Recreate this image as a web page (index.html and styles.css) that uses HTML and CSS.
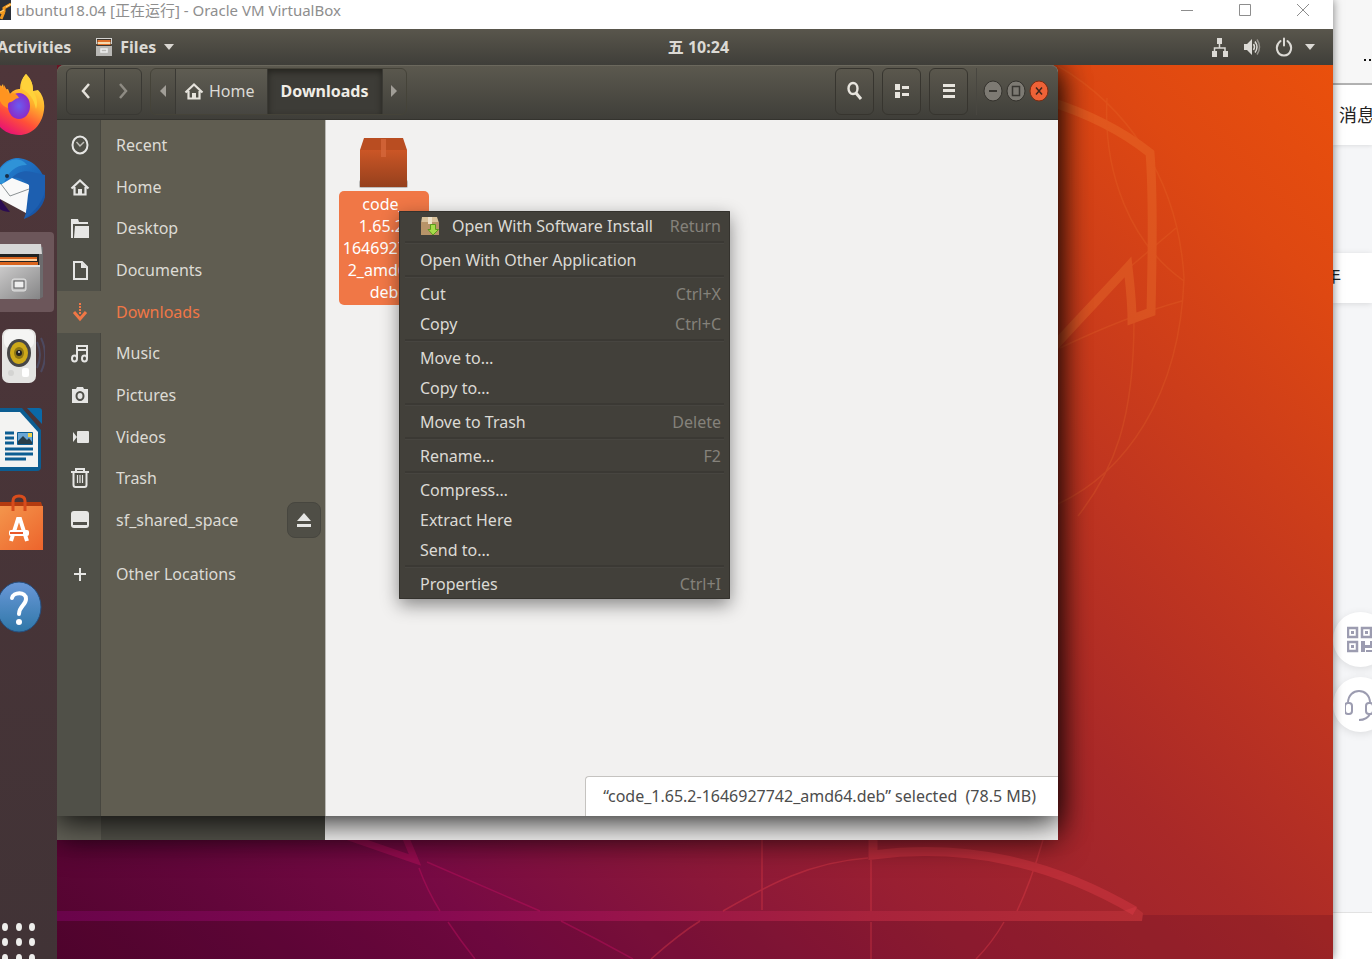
FILE: index.html
```html
<!DOCTYPE html>
<html lang="en">
<head>
<meta charset="utf-8">
<title>ubuntu18.04 - Oracle VM VirtualBox</title>
<link rel="stylesheet" href="styles.css">
</head>
<body>
<main class="vm">
  <header class="vm-title">
    <svg class="vm-logo" width="11" height="20" viewBox="0 0 11 20"><path fill="#2b3038" d="M0 0h11v20H0z"/><path fill="none" stroke="#f39a1e" stroke-width="3" d="M0 13l4-2V8l7-4M4 12l-3 7"/><path fill="none" stroke="#ffd98a" stroke-width="1" d="M0 12l4-2M6 7l5-3"/></svg>
    <h1 class="vm-name">ubuntu18.04 [正在运行] - Oracle VM VirtualBox</h1>
    <div class="vm-controls">
      <button aria-label="Minimize"><svg width="14" height="14" viewBox="0 0 14 14"><path d="M1 7.500h12"/></svg></button>
      <button aria-label="Maximize"><svg width="14" height="14" viewBox="0 0 14 14"><path d="M1.500 1.500h11v11h-11z"/></svg></button>
      <button aria-label="Close"><svg width="14" height="14" viewBox="0 0 14 14"><path d="M1 1l12 12M13 1L1 13"/></svg></button>
    </div>
  </header>
  <div class="guest">
    <div class="topbar">
      <div class="top-left">
        <button class="top-item">Activities</button>
        <button class="top-item files-menu">
          <svg width="18" height="20" viewBox="0 0 18 20"><path fill="#d4d3d0" d="M1 1h16v6H1z"/><path fill="#3a332c" d="M2 2h14v7H2z"/><path fill="#e0702a" d="M2.500 3h13v2h-13z"/><path fill="#f6d9ae" d="M2.500 5h13v2h-13z"/><path fill="#e0702a" d="M2.500 7h13v1h-13z"/><path fill="#b9b8b5" d="M1 9h16v10H1z"/><path fill="none" stroke="#eee" stroke-width="1.500" d="M6 15v-3h6v3z"/></svg>
          Files
          <svg width="12" height="8" viewBox="0 0 12 8"><path fill="#dad7d2" d="M1 1h10L6 7z"/></svg>
        </button>
      </div>
      <time class="clock">五 10:24</time>
      <div class="tray">
        <svg width="18" height="20" viewBox="0 0 18 20"><path fill="#dcdad5" d="M6 1h5v6H6zM1 14h5v6H1zM12 14h5v6h-5z"/><path fill="none" stroke="#dcdad5" stroke-width="1.500" d="M8.500 7v4M3.500 14v-3h10.500v3"/></svg>
        <svg width="18" height="18" viewBox="0 0 18 18"><path fill="#dcdad5" d="M1 6h3l5-5v16l-5-5H1z"/><path fill="none" stroke="#dcdad5" stroke-width="1.500" d="M10.500 6q2 3 0 6M12 3.500q4 5.500 0 11"/><path fill="none" stroke="#94918b" stroke-width="1.500" d="M14 1.500q5 7.500 0 15"/></svg>
        <svg width="18" height="20" viewBox="0 0 18 20"><path fill="none" stroke="#dcdad5" stroke-width="2" stroke-linecap="round" d="M5.500 4C-1 9 2 18.500 9 18.500S19 9 12.500 4M9 1.500v7"/></svg>
        <svg width="12" height="8" viewBox="0 0 12 8"><path fill="#dcdad5" d="M1 1h10L6 7z"/></svg>
      </div>
    </div>
    <div class="session">
      <svg class="wallpaper" viewBox="57 65 1276 894" preserveAspectRatio="xMaxYMax slice" aria-hidden="true">
        <defs><linearGradient id="sky" gradientUnits="userSpaceOnUse" x1="57" y1="959" x2="1142" y2="-126">
          <stop offset="0" stop-color="#52042f"/><stop offset=".1" stop-color="#62063a"/><stop offset=".21" stop-color="#770a44"/><stop offset=".33" stop-color="#8a1739"/><stop offset=".42" stop-color="#991f32"/><stop offset=".57" stop-color="#a92928"/><stop offset=".7" stop-color="#bf3520"/><stop offset=".89" stop-color="#de4812"/><stop offset="1" stop-color="#ea500c"/></linearGradient>
          <linearGradient id="band" gradientUnits="userSpaceOnUse" x1="57" y1="0" x2="1142" y2="0"><stop offset="0" stop-color="#69044a"/><stop offset=".33" stop-color="#850952"/><stop offset=".5" stop-color="#96124c"/><stop offset=".75" stop-color="#a8233c"/><stop offset="1" stop-color="#b52e34"/></linearGradient></defs>
        <path fill="url(#sky)" d="M-40 0h1400v1000H-40z"/>
        <path fill="#400020" opacity=".16" d="M57 921h1085v-6h191v44H57z"/>
        <path fill="url(#band)" d="M57 911h1066l12-4 8 6-1 8H57z"/>
        <g fill="none" stroke="#e03c48" opacity=".4">
          <path stroke-width="9" d="M873 835v20c95-12 180 8 262 56"/>
          <path stroke-width="1.500" d="M762 840v70M871 860v51M871 922v37M723 911C768 885 810 862 868 858M651 959c18-16 33-28 49-38M1043 840c-7 24-14 46-26 71M1004 922c-8 14-17 26-28 37"/></g>
        <g fill="none" stroke="#c01060" opacity=".45"><path stroke-width="7" d="M340 834l75 26-10-24"/><path stroke-width="1.500" d="M419 868q8 22 21 43M427 862l113 49M448 922q12 18 27 37M561 921q36 18 72 38"/></g>
        <g fill="none" stroke="#ec7530" opacity=".36">
          <path stroke-width="9" d="M1045 100c45 14 80 33 105 53 4 50 2 110 1 159l-19 7c0-18-2-34-4-52-20 22-52 55-78 84"/>
          <path stroke-width="1.500" opacity=".6" d="M1058 66c65 38 120 108 126 212-4 120-60 195-126 226M1107 98c-4 75 23 145 77 183M1060 348q67-32 122-47M1130 267l46-39M1134 320c0 100-20 150-56 196"/></g>
      </svg>
      <nav class="dock" aria-label="Dock">
        <div class="dock-apps">
          <button aria-label="Firefox"><svg width="52" height="64" viewBox="-7 73 52 64">
            <defs><linearGradient id="ff" x1=".8" y1="0" x2=".3" y2="1"><stop offset="0" stop-color="#fff04a"/><stop offset=".4" stop-color="#ffb02c"/><stop offset=".7" stop-color="#ff5038"/><stop offset="1" stop-color="#e60e78"/></linearGradient><radialGradient id="ffb"><stop offset="0" stop-color="#6a5cf0"/><stop offset="1" stop-color="#8a2cc8"/></radialGradient></defs>
            <path fill="url(#ff)" d="M26 74c5 5 7 10 7 17l5-1c5 5 7 12 6 20-2 15-12 25-25 25C4 135-7 124-7 108c0-9 3-15 7-20l3-4 1 6 4-1 2 5c3-4 7-5 10-5 0-6 2-11 6-15z"/>
            <ellipse cx="19" cy="106" rx="11" ry="13" fill="url(#ffb)"/>
            <path fill="#ffd23a" d="M26 74c5 5 7 10 7 17 4 6 5 12 3 18-2-10-7-17-14-20-1-6 0-11 4-15z"/>
            <path fill="#ff9420" d="M0 85l3 3 1-3 5 9c5-2 8 0 10 4-4 0-5 3-8 4-3 0-4 3-3 6-8-2-12-12-8-23z"/></svg></button>
          <button aria-label="Thunderbird"><svg width="52" height="64" viewBox="-7 157 52 64">
            <defs><linearGradient id="tb" x1="0" y1="0" x2="1" y2="1"><stop offset="0" stop-color="#2587d8"/><stop offset="1" stop-color="#154b9c"/></linearGradient></defs>
            <path fill="#2b0b52" d="M-7 190l17 22c-7 0-14-4-17-10z"/><path fill="url(#tb)" d="M16 158c17 0 30 14 30 31 0 13-7 25-22 30l3-6C10 205 0 195-5 185c0-14 8-25 21-27z"/>
            <path fill="#2f93d8" d="M12 160c-10 4-15 12-16 20l7 5c5-13 12-20 24-20-4-5-9-7-15-5z"/>
            <path fill="#f9f9f9" d="M2 184l10-6 18 7-2 10-2 18-26-14-5-14z"/><path fill="none" stroke="#8c9294" d="M1 184l9 12 19-7"/><circle cx="7" cy="176" r="2" fill="#183048"/>
            <path fill="#1d5fb0" d="M12 178c4-5 12-8 20-6l13 3c3 16-3 32-21 44 4-11 6-22 5-34-5-6-10-8-17-7z"/></svg></button>
          <button class="running" aria-label="Files"><svg width="52" height="64" viewBox="-7 240 52 64">
            <defs><linearGradient id="fc" x1="0" y1="0" x2="1" y2="1"><stop offset="0" stop-color="#d0cfcf"/><stop offset="1" stop-color="#858586"/></linearGradient></defs>
            <path fill="#6c6b6d" d="M36 246l7 1v50l-6 3z"/><path fill="#d6d6d6" d="M-4 244h45l1 10H-6z"/><path fill="#222" d="M-6 254h45v13H-6z"/><path fill="#d9641e" d="M-6 257h43v3H-6zM-6 262h44v3H-6z"/><path fill="#ffd4a4" d="M-6 259h43v2H-6z"/><path fill="url(#fc)" d="M-6 266h46v33H-6z"/><path fill="#e5e5e5" d="M-6 265h46v2H-6z"/><rect x="12" y="279" width="14" height="12" rx="2" fill="#c2c2c2" stroke="#e2e2e2"/><rect x="14" y="281" width="10" height="7" fill="#eee" stroke="#59595a"/></svg></button>
          <button aria-label="Rhythmbox"><svg width="52" height="64" viewBox="-7 324 52 64">
            <path fill="none" stroke="#506a9c" stroke-width="2" opacity=".4" d="M37 342q6 13 0 26M41 338q8 17 0 34"/><rect x="2" y="329" width="34" height="54" rx="7" fill="#e4e4e2"/><rect x="4" y="330" width="30" height="18" rx="6" fill="#f5f5f4"/><ellipse cx="19" cy="353" rx="12" ry="14" fill="#474747"/><ellipse cx="19" cy="353" rx="9" ry="11" fill="#cda91a"/><ellipse cx="19" cy="353" rx="5" ry="6" fill="#8c7515"/><ellipse cx="19" cy="353" rx="3" ry="3" fill="#222"/><circle cx="19" cy="352" r="1" fill="#ddd"/><rect x="22" y="368" width="7" height="9" rx="2" fill="#fff"/><circle cx="11" cy="373" r="3" fill="#d4d4d2"/></svg></button>
          <button aria-label="LibreOffice Writer"><svg width="52" height="64" viewBox="-7 408 52 64">
            <path fill="#0c5d92" d="M-6 408h28l19 22v37q0 4-4 4H-6z"/><path fill="#f3f3f2" d="M-4 412h24l18 20v35H-4z"/><path fill="#0a69a8" d="M27 408h12q3 0 3 3v13z"/><path stroke="#0c5d92" stroke-width="3" d="M5 433h9M5 438h9M5 443h9M5 449h28M5 454h28M5 459h21"/><path fill="#69a6d6" stroke="#0c5d92" d="M17.500 432.500h15v12h-15z"/><path fill="#f0d34c" d="M28 433h4v4h-4z"/><path fill="#273e4a" d="M18 444v-3l5-5 4 4 2-2 3 4v2z"/></svg></button>
          <button aria-label="Ubuntu Software"><svg width="52" height="64" viewBox="-7 491 52 64">
            <defs><linearGradient id="sw" x1="0" y1="0" x2="1" y2="1"><stop offset="0" stop-color="#f4994e"/><stop offset="1" stop-color="#ed642c"/></linearGradient></defs>
            <path fill="#b33b10" d="M-5 502h46l2 6H-7z"/><path fill="url(#sw)" d="M-7 506h50v44H-7z"/><path fill="none" stroke="#d84c1c" stroke-width="3" d="M13 511v-10q0-5 6-5t6 5v10"/><path fill="none" stroke="#fff" stroke-width="4" d="M11 541l7-22h2l7 22"/><rect x="9" y="530" width="20" height="6" rx="2" fill="#fff"/><path fill="#e9592b" d="M10 532h13v2H10z"/></svg></button>
          <button aria-label="Help"><svg width="52" height="64" viewBox="-7 575 52 64">
            <defs><linearGradient id="hp" x1="0" y1="0" x2="0" y2="1"><stop offset="0" stop-color="#6a98d8"/><stop offset="1" stop-color="#2f77a8"/></linearGradient></defs>
            <ellipse cx="19" cy="607" rx="22" ry="25" fill="url(#hp)" stroke="#254f80" stroke-width="1"/><path fill="none" stroke="#fff" stroke-width="4" stroke-linecap="round" d="M12 598c1-6 14-7 14 1 0 6-7 7-7 15"/><circle cx="19" cy="622" r="3" fill="#fff"/></svg></button>
        </div>
        <button class="app-grid" aria-label="Show Applications"><svg width="38" height="38" viewBox="0 921 38 38"><g fill="#eeeeec"><ellipse cx="5" cy="927" rx="3" ry="4"/><ellipse cx="19" cy="927" rx="3" ry="4"/><ellipse cx="32" cy="927" rx="3" ry="4"/><ellipse cx="5" cy="942" rx="3" ry="4"/><ellipse cx="19" cy="942" rx="3" ry="4"/><ellipse cx="32" cy="942" rx="3" ry="4"/><ellipse cx="5" cy="958" rx="3" ry="4"/><ellipse cx="19" cy="958" rx="3" ry="4"/><ellipse cx="32" cy="958" rx="3" ry="4"/></g></svg></button>
      </nav>
      <div class="desktop">
        <div class="back-window"></div>
        <section class="window" aria-label="Downloads">
          <header class="headerbar">
            <div class="group">
              <button class="nav-btn" aria-label="Back"><svg width="14" height="18" viewBox="0 0 14 18"><path fill="none" stroke="#e4e1da" stroke-width="2.500" d="M10 2L4 9l6 7"/></svg></button>
              <button class="nav-btn" aria-label="Forward"><svg width="14" height="18" viewBox="0 0 14 18"><path fill="none" stroke="#8e8b83" stroke-width="2.500" d="M4 2l6 7-6 7"/></svg></button>
            </div>
            <div class="group path">
              <button class="path-arrow" aria-label="Previous folders"><svg width="8" height="14" viewBox="0 0 8 14"><path fill="#a19e97" d="M7 1v12L1 7z"/></svg></button>
              <button class="crumb"><svg width="20" height="18" viewBox="69 177 20 18"><path fill="none" stroke="#e6e3dc" stroke-width="2.200" d="M70.500 187.500l8.500-8 8.500 8M73.500 186v7.500h11V186"/><path fill="#e6e3dc" d="M77 188h4v6h-4z"/></svg>Home</button>
              <button class="crumb current">Downloads</button>
              <button class="path-arrow" aria-label="Next folders"><svg width="8" height="14" viewBox="0 0 8 14"><path fill="#a19e97" d="M1 1v12l6-6z"/></svg></button>
            </div>
            <div class="tools">
              <button aria-label="Search"><svg width="18" height="20" viewBox="0 0 18 20"><ellipse cx="7" cy="7.500" rx="4.500" ry="5.500" fill="none" stroke="#e8e5de" stroke-width="2.400"/><path stroke="#e8e5de" stroke-width="3" d="M10 12l5 6"/></svg></button>
              <button aria-label="View"><svg width="16" height="16" viewBox="0 0 16 16"><path fill="#e8e5de" d="M1 1h5v6H1zM1 9h5v6H1zM8 3h7v3H8zM8 10h7v3H8z"/></svg></button>
              <button aria-label="Menu"><svg width="14" height="16" viewBox="0 0 14 16"><path fill="#e8e5de" d="M1 1h12v3H1zM1 6h12v3H1zM1 12h12v3H1z"/></svg></button>
            </div>
            <div class="win-controls">
              <button aria-label="Minimize"><svg width="20" height="22" viewBox="0 0 20 22"><ellipse cx="10" cy="11" rx="9" ry="10" fill="#7d7a73" stroke="#35332e"/><path stroke="#393732" stroke-width="2" d="M6 11h8"/></svg></button>
              <button aria-label="Maximize"><svg width="20" height="22" viewBox="0 0 20 22"><ellipse cx="10" cy="11" rx="9" ry="10" fill="#7d7a73" stroke="#35332e"/><path fill="none" stroke="#393732" stroke-width="1.500" d="M6.500 6.500h7v9h-7z"/></svg></button>
              <button aria-label="Close"><svg width="20" height="22" viewBox="0 0 20 22"><ellipse cx="10" cy="11" rx="9" ry="10" fill="#ee6237" stroke="#7c2c12"/><path stroke="#40261c" stroke-width="1.500" d="M7 7.500l6 7M13 7.500l-6 7"/></svg></button>
            </div>
          </header>
          <div class="window-body">
            <nav class="places" aria-label="Places">
              <div class="place-list">
                <a href="#recent"><span class="ico"><svg viewBox="69 134 20 20"><ellipse cx="79" cy="144" rx="7.500" ry="8.500" fill="none" stroke="#e6e6e4" stroke-width="2"/><path fill="none" stroke="#bfbeb8" stroke-width="1.500" d="M75.500 141l3.500 4 4-4"/></svg></span>Recent</a>
                <a href="#home"><span class="ico"><svg viewBox="69 176 20 20"><path fill="none" stroke="#e6e6e4" stroke-width="2.200" d="M70.500 187.500l8.500-8 8.500 8M73.500 186v7.500h11V186"/><path fill="#e6e6e4" d="M77 188h4v6h-4z"/></svg></span>Home</a>
                <a href="#desktop"><span class="ico"><svg viewBox="69 218 20 20"><path fill="#e6e6e4" d="M70 219h7l1 3h9v2H72v14h-2zM74 226h14v12H73z"/></svg></span>Desktop</a>
                <a href="#documents"><span class="ico"><svg viewBox="69 260 20 20"><path fill="none" stroke="#e6e6e4" stroke-width="2" d="M73 262h8l5 5v12H73z"/><path fill="#e6e6e4" d="M80 262l6 6h-6z"/></svg></span>Documents</a>
                <a class="active" href="#downloads"><span class="ico"><svg viewBox="69 302 20 20"><path fill="none" stroke="#f07746" stroke-width="2" stroke-dasharray="2 1" d="M79 303v12"/><path fill="none" stroke="#f07746" stroke-width="3" d="M73 312l6 7 6-7"/></svg></span>Downloads</a>
                <a href="#music"><span class="ico"><svg viewBox="69 343 20 20"><path fill="none" stroke="#e6e6e4" stroke-width="2" d="M76 358v-12h10v12M76 350h10"/><ellipse cx="73.500" cy="358.500" rx="2.500" ry="3" fill="none" stroke="#e6e6e4" stroke-width="2"/><ellipse cx="83.500" cy="358.500" rx="2.500" ry="3" fill="none" stroke="#e6e6e4" stroke-width="2"/></svg></span>Music</a>
                <a href="#pictures"><span class="ico"><svg viewBox="69 385 20 20"><path fill="#e6e6e4" d="M71 389h4l1-2h6l1 2h4v14H71z"/><ellipse cx="79" cy="396" rx="3.500" ry="4" fill="none" stroke="#50504a" stroke-width="2"/></svg></span>Pictures</a>
                <a href="#videos"><span class="ico"><svg viewBox="69 427 20 20"><rect x="76" y="431" width="12" height="12" rx="1" fill="#e6e6e4"/><path fill="#e6e6e4" d="M72 432l4 5-4 5z"/></svg></span>Videos</a>
                <a href="#trash"><span class="ico"><svg viewBox="69 468 20 20"><path fill="none" stroke="#e6e6e4" stroke-width="2" d="M70 472h18M75 471v-2h8v2M72.500 472v13q0 2 2 2h9q2 0 2-2v-13"/><path stroke="#e6e6e4" stroke-width="1.200" d="M76.500 475v8M79 475v8M81.500 475v8"/></svg></span>Trash</a>
                <div class="mount"><a href="#shared"><span class="ico"><svg viewBox="69 510 20 20"><rect x="70" y="511" width="18" height="17" rx="3" fill="#e6e6e4"/><path fill="#50504a" d="M72 522h14v3H72z"/></svg></span>sf_shared_space</a>
                <button class="eject" aria-label="Eject"><svg width="16" height="16" viewBox="0 0 16 16"><path fill="#e6e6e4" d="M8 1l7 8H1zM1 12h14v3H1z"/></svg></button></div>
              </div>
              <a class="other" href="#other"><span class="ico"><svg viewBox="69 563 20 20"><path stroke="#e6e6e4" stroke-width="2" d="M73 573h12M79 567v13"/></svg></span>Other Locations</a>
            </nav>
            <div class="files">
              <figure class="file">
                <svg width="50" height="52" viewBox="359 137 50 52"><defs><linearGradient id="box" x1="0" y1="0" x2="0" y2="1"><stop offset="0" stop-color="#cb5626"/><stop offset="1" stop-color="#95401d"/></linearGradient></defs><rect x="359" y="180" width="49" height="8" rx="2" fill="#8a8886" opacity=".5"/><path fill="#b94d21" d="M364 138h39l4 12h-47z"/><path fill="url(#box)" d="M360 150h47v37h-47z"/><path fill="#d4673b" opacity=".8" d="M381 139h5v18h-5z"/></svg>
                <figcaption>code_<br>1.65.2-<br>164692774<br>2_amd64.<br>deb</figcaption>
              </figure>
              <p class="status">“code_1.65.2-1646927742_amd64.deb” selected&nbsp; (78.5 MB)</p>
            </div>
          </div>
          <div class="menu" role="menu">
            <button role="menuitem"><svg width="20" height="20" viewBox="0 0 20 20"><path fill="#d9c19a" d="M2 1h15l2 6H1z"/><path fill="#b79468" d="M1 6h18v13H1z"/><path fill="#eee0c8" d="M8 1h4v7H8z"/><path fill="#a6dc4a" stroke="#5a9a1c" d="M10.500 8.500h5v5h3L13 19l-5-5.500h2.500z"/></svg><span>Open With Software Install</span><kbd>Return</kbd></button>
            <hr><button role="menuitem"><span>Open With Other Application</span></button>
            <hr><button role="menuitem"><span>Cut</span><kbd>Ctrl+X</kbd></button>
            <button role="menuitem"><span>Copy</span><kbd>Ctrl+C</kbd></button>
            <hr><button role="menuitem"><span>Move to…</span></button>
            <button role="menuitem"><span>Copy to…</span></button>
            <hr><button role="menuitem"><span>Move to Trash</span><kbd>Delete</kbd></button>
            <hr><button role="menuitem"><span>Rename…</span><kbd>F2</kbd></button>
            <hr><button role="menuitem"><span>Compress…</span></button>
            <button role="menuitem"><span>Extract Here</span></button>
            <button role="menuitem"><span>Send to…</span></button>
            <hr><button role="menuitem"><span>Properties</span><kbd>Ctrl+I</kbd></button>
          </div>
        </section>
      </div>
    </div>
  </div>
</main>
<aside class="page-edge">
  <div class="edge-tabs"><svg width="9" height="4" viewBox="0 0 9 4"><path fill="#111" d="M1 1h2v2H1zM6 1h2v2H6z"/></svg></div>
  <div class="edge-nav">消息</div>
  <div class="edge-card">年</div>
  <div class="edge-float">
    <button aria-label="QR code"><svg width="28" height="28" viewBox="1 0 28 28"><g fill="none" stroke="#9c9cb0" stroke-width="2.500"><path d="M2 2h9v9H2zM16 2h9v9h-9zM2 16h9v9H2z"/></g><path fill="#9c9cb0" d="M5 5h3v3H5zM19 5h3v3h-3zM5 19h3v3H5zM15 15h4v11h-4zM19 19h6v3h-6zM20 24h7v2h-7zM24 15h3v7h-3z"/></svg></button>
    <button aria-label="Support"><svg width="32" height="32" viewBox="3 0 32 32"><g fill="none" stroke="#9c9cb0" stroke-width="2"><rect x="3" y="14" width="7" height="11" rx="3"/><rect x="24" y="14" width="7" height="11" rx="3"/><path d="M6 14C6 -2 28 -2 28 14M28 25q-3 6-11 6"/></g></svg></button>
  </div>
  <div class="edge-foot"></div>
</aside>
</body>
</html>
```

FILE: styles.css
```css
* { box-sizing: border-box; }
body {
  margin: 0;
  height: 100vh;
  display: flex;
  overflow: hidden;
  background: #f5f6f8;
  font: 16px/22px "Noto Sans", "Noto Sans CJK SC", sans-serif;
}
button {
  margin: 0;
  padding: 0;
  border: 0;
  background: none;
  color: inherit;
  font: inherit;
}
svg { display: block; flex: none; }

/* Host window */
.vm {
  flex: 1;
  min-width: 0;
  display: flex;
  flex-direction: column;
  position: relative;
  z-index: 1;
  box-shadow: 0 0 9px #00000080;
}
.vm-title {
  display: flex;
  height: 29px;
  background: #fff;
  color: #8e8e8e;
}
.vm-name {
  flex: 1;
  margin: 0 0 0 5px;
  font-size: 15px;
  line-height: 20px;
  font-weight: 400;
}
.vm-controls { display: flex; gap: 44px; padding: 3px 23px 0 0; }
.vm-controls button { height: 14px; }
.vm-controls path { fill: none; stroke: #8d8d8d; }

/* Guest screen, scrolled a little to the right */
.guest {
  flex: 1;
  min-height: 0;
  margin-left: -19px;
  display: flex;
  flex-direction: column;
  color: #dcdad5;
}
.topbar {
  height: 36px;
  display: grid;
  grid-template-columns: 8fr auto 7fr;
  align-items: center;
  padding: 0 17px 0 16px;
  background: linear-gradient(#59564c, #3f3e39);
  font-weight: 700;
}
.top-left, .files-menu { display: flex; align-items: center; }
.top-left { gap: 24px; }
.files-menu { gap: 7px; }
.tray { justify-self: end; display: flex; align-items: center; gap: 14px; }
.tray svg:last-child { margin-left: -3px; }
.session {
  flex: 1;
  min-height: 0;
  display: flex;
  position: relative;
  overflow: hidden;
}
.wallpaper {
  position: absolute;
  top: 0;
  right: 0;
  width: calc(100% - 76px);
  height: 100%;
}

/* Dock */
.dock {
  width: 76px;
  position: relative;
  display: flex;
  flex-direction: column;
  justify-content: space-between;
  background: linear-gradient(#4f363a, #413336);
}
.dock-apps {
  height: 582px;
  display: grid;
  grid-auto-rows: 1fr;
  gap: 4px;
}
.dock-apps button {
  display: grid;
  place-items: center;
  margin: 0 3px;
  border-radius: 4px;
}
.running { background: #6c565a; }
.app-grid { padding-left: 19px; }

/* Files window */
.desktop { flex: 1; position: relative; overflow: hidden; }
.back-window, .window { position: absolute; left: 0; right: 275px; top: 0; }
.back-window {
  bottom: 119px;
  border-radius: 8px 8px 0 0;
  background: linear-gradient(90deg, #605f55 44px, #504f47 44px, #504f47 268px, #f2f1f0 268px);
  box-shadow: 0 2px 30px #000000a0;
}
.window {
  bottom: 143px;
  display: flex;
  flex-direction: column;
  border-radius: 7px 7px 0 0;
  box-shadow: 0 6px 30px #000000dd;
}
.headerbar {
  height: 55px;
  display: flex;
  align-items: center;
  padding: 0 9px 2px 9px;
  border-bottom: 1px solid #34332e;
  border-radius: 7px 7px 0 0;
  background: linear-gradient(#5c594f, #3f3e39);
  box-shadow: inset 0 1px #6b685d;
}
.group {
  display: flex;
  height: 47px;
  border: 1px solid #3a3934;
  border-radius: 6px;
  overflow: hidden;
}
.group button { display: flex; align-items: center; justify-content: center; }
.group button + button { border-left: 1px solid #3a3934; }
.nav-btn { width: 37px; }
.path { margin-left: 8px; border-color: #454339; }
.path-arrow { width: 24px; }
.crumb { gap: 5px; padding: 0 12px 0 8px; background: #ffffff08; }
.current {
  padding: 0 13px;
  background: #3d3c37;
  box-shadow: inset 0 3px 6px #25241f;
  color: #f0ede6;
  font-weight: 700;
}
.tools {
  display: flex;
  gap: 8px;
  margin-left: auto;
  padding-right: 8px;
  border-right: 1px solid #484640;
}
.tools button {
  display: grid;
  place-items: center;
  width: 39px;
  height: 47px;
  border: 1px solid #37352f;
  border-radius: 6px;
  background: linear-gradient(#5a574d, #43423c);
}
.win-controls { display: flex; gap: 3px; margin-left: 6px; }
.window-body { flex: 1; min-height: 0; display: flex; }
.places {
  width: 269px;
  padding-top: 4px;
  border-right: 1px solid #b9b8b4;
  background: linear-gradient(90deg, #505048 43px, #47463f 43px, #47463f 44px, #605d51 44px);
  color: #dddbd5;
}
.place-list { height: 417px; display: grid; grid-auto-rows: 1fr; }
.places a {
  display: flex;
  align-items: center;
  gap: 13px;
  color: inherit;
  text-decoration: none;
}
.ico { width: 46px; display: grid; place-items: center; }
.ico svg { width: 20px; height: 20px; }
.places .active { background: #605d51; color: #f07746; }
.mount { display: flex; align-items: center; justify-content: space-between; padding-right: 4px; }
.eject {
  display: grid;
  place-items: center;
  width: 34px;
  height: 36px;
  border: 1px solid #47463f;
  border-radius: 8px;
  background: #4f4e46;
}
.places .other { height: 42px; margin-top: 12px; }
.files {
  flex: 1;
  display: flex;
  flex-direction: column;
  justify-content: space-between;
  align-items: flex-start;
  background: #f2f1f0;
}
.file {
  width: 90px;
  margin: 17px 0 0 13px;
  display: flex;
  flex-direction: column;
  align-items: center;
  gap: 2px;
}
.file figcaption {
  width: 100%;
  padding: 2px 0;
  border-radius: 5px;
  background: #f07746;
  color: #fff;
  text-align: center;
}
.status {
  align-self: flex-end;
  margin: 0;
  padding: 8px 22px 9px 17px;
  border: solid #c5c3c0;
  border-width: 1px 0 0 1px;
  border-radius: 4px 0 0 0;
  background: #fff;
  color: #4c4c4c;
}

/* Context menu */
.menu {
  position: absolute;
  left: 342px;
  top: 146px;
  width: 331px;
  border-radius: 1px;
  background: #42403a;
  box-shadow: inset 0 0 0 1px #34322d, 0 6px 18px #00000070;
}
.menu button {
  width: 100%;
  height: 30px;
  display: flex;
  align-items: center;
  gap: 12px;
  padding: 0 9px 0 21px;
  white-space: nowrap;
}
.menu kbd { margin-left: auto; font: inherit; color: #85827b; }
.menu hr {
  height: 4px;
  margin: 0 6px;
  border: 0;
  background: linear-gradient(#3b3934 2px, #474540 2px, #474540 3px, #42403a 3px);
}

/* Page behind the host window */
.page-edge {
  width: 39px;
  display: flex;
  flex-direction: column;
  position: relative;
  overflow: hidden;
  white-space: nowrap;
  color: #222;
}
.edge-tabs {
  height: 85px;
  padding: 58px 0 0 30px;
  border-bottom: 2px solid #b5b5b5;
  background: #f7f7f7;
}
.edge-nav {
  height: 60px;
  padding: 19px 0 0 6px;
  background: #fff;
  font-size: 18px;
  box-shadow: 0 1px 4px #0000001a;
}
.edge-card {
  height: 50px;
  margin-top: 108px;
  padding-top: 12px;
  background: #fff;
  text-indent: -8px;
  box-shadow: 0 1px 6px #0000001f;
}
.edge-float { display: grid; gap: 10px; margin-top: 309px; }
.edge-float button {
  display: grid;
  place-items: center;
  width: 55px;
  height: 55px;
  border-radius: 50%;
  background: #fff;
  box-shadow: 0 2px 8px #0000001a;
}
.edge-foot { height: 47px; margin-top: auto; border-top: 1px solid #e2e2e2; background: #fff; }
```
